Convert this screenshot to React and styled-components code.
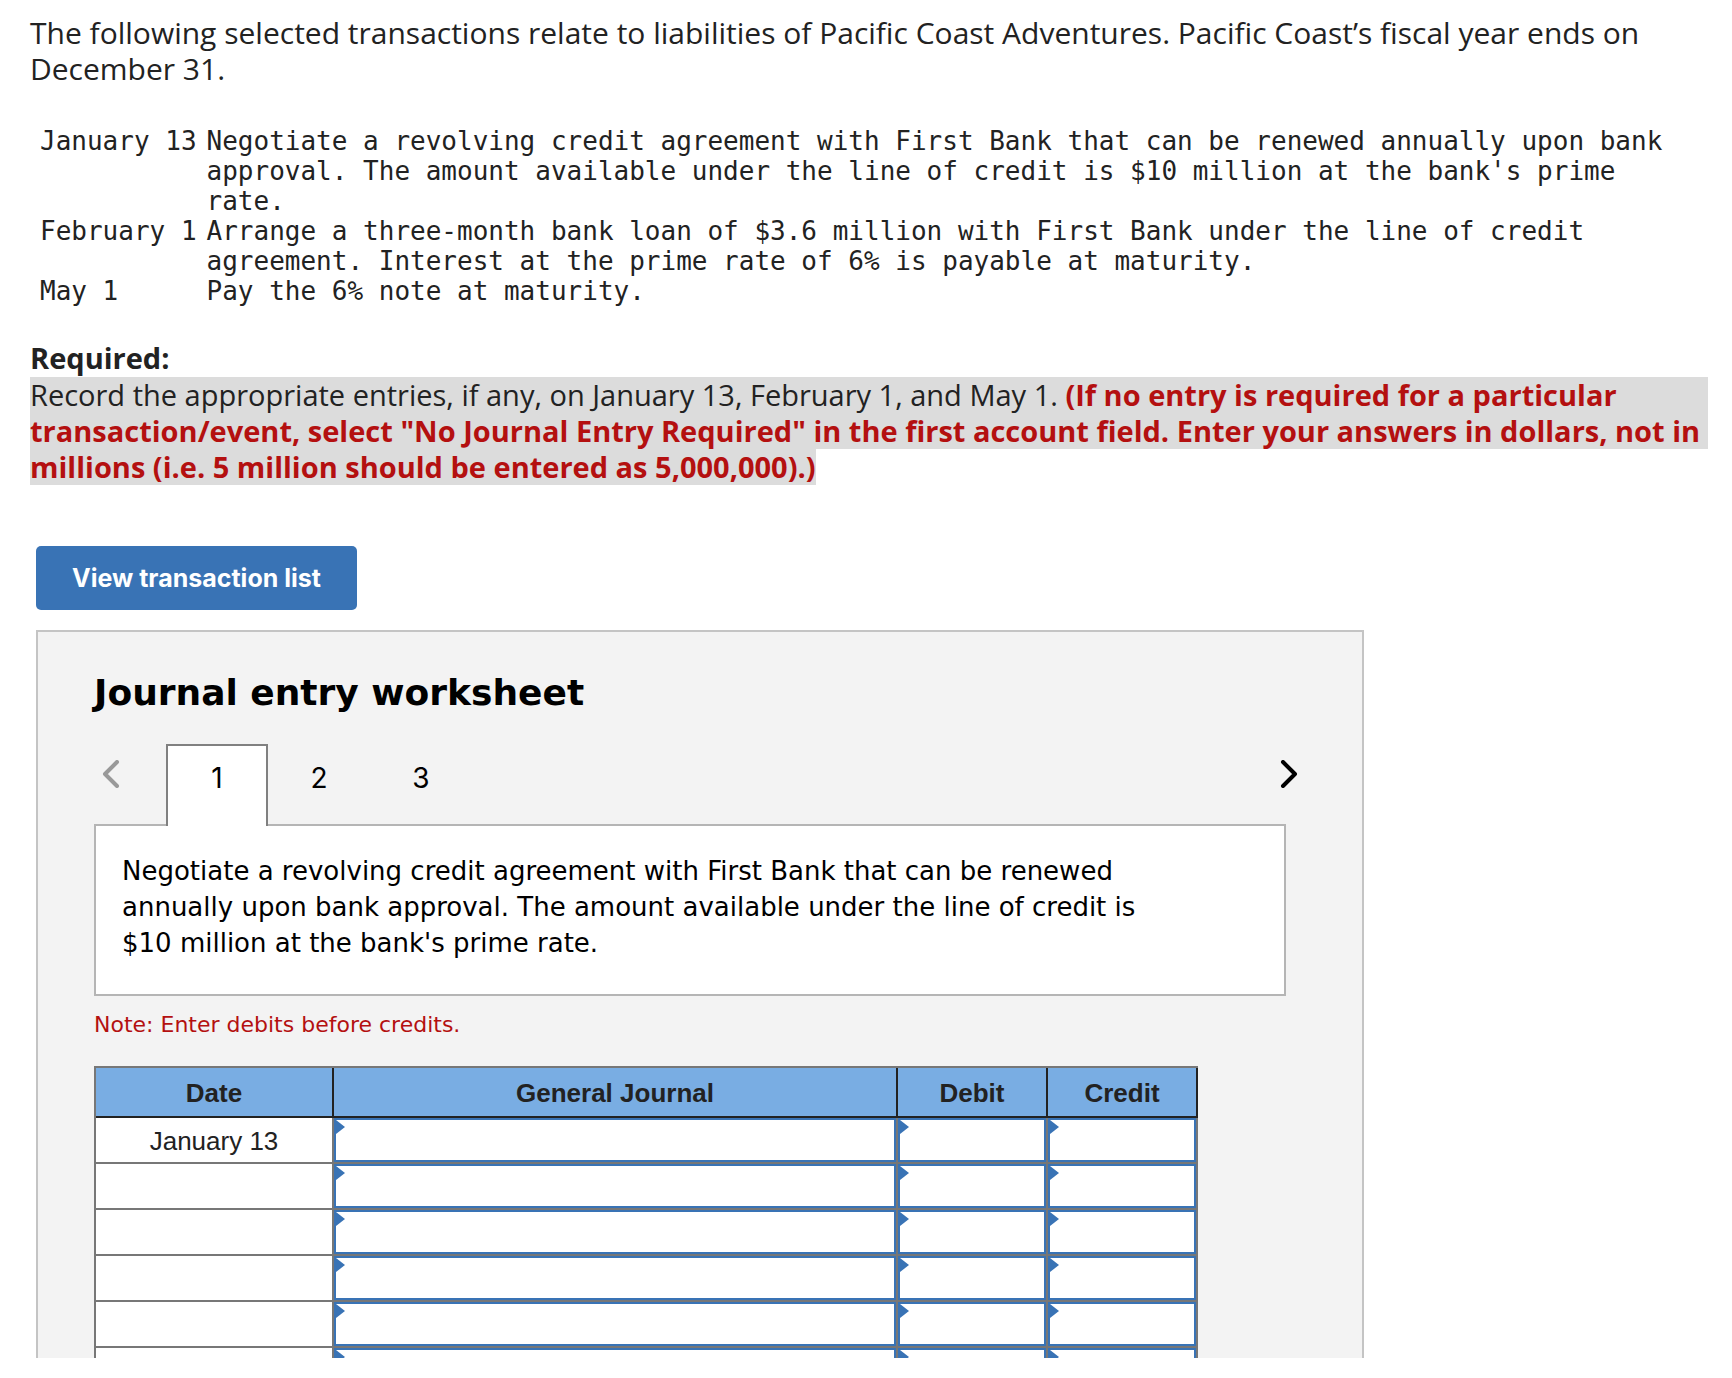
import React from "react"
import styled, { createGlobalStyle } from "styled-components"

const GlobalStyle = createGlobalStyle`
  *, *::before, *::after {
    box-sizing: border-box;
  }
  body {
    margin: 0;
    background-color: #fff;
    color: #222;
    font-family: "Open Sans", Lato, sans-serif;
    font-size: 29px;
    line-height: 36px;
  }
  p, h1, h2 {
    margin: 0;
  }
  button, input {
    font: inherit;
    color: inherit;
  }
`

const Page = styled.main`
  height: 100vh;
  padding-bottom: 20px;
`

const Content = styled.div`
  height: 100%;
  overflow: hidden;
  padding: 15px 24px 0 30px;
`

const Intro = styled.p`
  font-size: 30px;
`

const Transactions = styled.table`
  margin: 39px 0 34px 10px;
  border-collapse: collapse;
  font-family: "DejaVu Sans Mono", monospace;
  font-size: 26px;
  line-height: 30px;
  th, td {
    padding: 0;
    text-align: left;
    vertical-align: top;
    font-weight: normal;
  }
  th {
    padding-right: 10px;
    white-space: nowrap;
  }
`

const Required = styled.h2`
  margin-bottom: 1px;
  font-size: 29px;
  line-height: 36px;
`

const Highlight = styled.span`
  display: ${({ $full }) => ($full ? "block" : "inline-block")};
  background-color: #dcdcdc;
`

const Hint = styled.strong`
  color: #b41010;
`

const ListButton = styled.button`
  display: block;
  height: 64px;
  margin: 61px 0 20px 6px;
  padding: 0 36px;
  border: none;
  border-radius: 5px;
  background-color: #3973b5;
  color: #fff;
  font-family: Inter, sans-serif;
  font-size: 25px;
  font-weight: 700;
  cursor: pointer;
`

const Worksheet = styled.section`
  max-width: 1328px;
  margin-left: 6px;
  padding: 43px 76px 60px 56px;
  border: 2px solid #c4c4c4;
  background-color: #f3f3f3;
  color: #000;
  font-family: "DejaVu Sans", Verdana, sans-serif;
  font-size: 26px;
`

const Title = styled.h1`
  font-size: 36px;
  line-height: 36px;
`

const TabBar = styled.nav`
  position: relative;
  display: flex;
  align-items: flex-start;
  margin: 33px -20px -2px 0;
`

const Arrow = styled.button`
  display: flex;
  align-items: center;
  height: 60px;
  padding: 0 8px;
  border: none;
  background: none;
  color: ${({ disabled }) => (disabled ? "#999" : "#000")};
  svg {
    width: 18px;
    height: 28px;
  }
`

const Tabs = styled.div`
  display: flex;
  flex: 1;
  margin-left: 38px;
`

const Tab = styled.button`
  width: 102px;
  height: 82px;
  padding: 0 0 16px;
  border: 2px solid ${({ $active }) => ($active ? "#808080" : "transparent")};
  border-bottom: none;
  background-color: ${({ $active }) => ($active ? "#fff" : "transparent")};
  font-family: Inter, sans-serif;
  font-size: 28px;
  cursor: pointer;
`

const Description = styled.div`
  padding: 27px 110px 33px 26px;
  border: 2px solid #b5b5b5;
  background-color: #fff;
`

const Note = styled.p`
  margin: 11px 0 23px;
  color: #b41010;
  font-size: 22px;
`

const Journal = styled.table`
  width: 100%;
  max-width: 1104px;
  table-layout: fixed;
  border-collapse: separate;
  border-spacing: 0;
  border-top: 2px solid #777;
  border-left: 2px solid #777;
  background-color: #fff;
  color: #222;
  font-family: "Liberation Sans", Arial, sans-serif;
  font-size: 26px;
  th, td {
    padding: 0;
    text-align: center;
    border-right: 2px solid #777;
    border-bottom: 2px solid #777;
  }
  thead th {
    height: 50px;
    padding-top: 2px;
    border-color: #222;
    background-color: #79ade3;
  }
  td {
    height: 46px;
  }
  td:first-child {
    padding-top: 2px;
  }
`

const Col = styled.col`
  width: ${({ $width }) => $width};
`

const Field = styled.label`
  position: relative;
  display: block;
  &::before {
    content: "";
    position: absolute;
    top: 2px;
    left: 2px;
    border: solid transparent;
    border-width: 7px 0 7px 9px;
    border-left-color: #3973b5;
  }
  input {
    display: block;
    width: 100%;
    height: 44px;
    padding: 0 14px;
    border: 2px solid #3973b5;
    border-radius: 0;
    background-color: #fff;
    outline: none;
  }
`

const transactions = [
  {
    date: "January 13",
    text: "Negotiate a revolving credit agreement with First Bank that can be renewed annually upon bank approval. The amount available under the line of credit is $10 million at the bank's prime rate.",
  },
  {
    date: "February 1",
    text: "Arrange a three-month bank loan of $3.6 million with First Bank under the line of credit agreement. Interest at the prime rate of 6% is payable at maturity.",
  },
  { date: "May 1", text: "Pay the 6% note at maturity." },
]

const rows = ["January 13", "", "", "", "", ""]
const fields = ["General Journal", "Debit", "Credit"]

const Chevron = ({ points }) => (
  <svg viewBox="0 0 18 28" fill="none" stroke="currentColor" strokeWidth="4" strokeLinecap="round" strokeLinejoin="round">
    <polyline points={points} />
  </svg>
)

const App = () => (
  <Page>
    <GlobalStyle />
    <Content>
      <Intro>
        The following selected transactions relate to liabilities of Pacific Coast Adventures. Pacific Coast’s fiscal year ends on December 31.
      </Intro>
      <Transactions>
        <tbody>
          {transactions.map(({ date, text }) => (
            <tr key={date}>
              <th scope="row">{date}</th>
              <td>{text}</td>
            </tr>
          ))}
        </tbody>
      </Transactions>
      <Required>Required:</Required>
      <p>
        <Highlight $full>
          Record the appropriate entries, if any, on January 13, February 1, and May 1.{" "}
          <Hint>
            (If no entry is required for a particular transaction/event, select "No Journal Entry Required" in the first account field. Enter your answers in dollars, not in
          </Hint>
        </Highlight>
        <Highlight>
          <Hint>millions (i.e. 5 million should be entered as 5,000,000).)</Hint>
        </Highlight>
      </p>
      <ListButton type="button">View transaction list</ListButton>
      <Worksheet>
        <Title>Journal entry worksheet</Title>
        <TabBar>
          <Arrow type="button" aria-label="Previous" disabled>
            <Chevron points="15,2 3,14 15,26" />
          </Arrow>
          <Tabs>
            {[1, 2, 3].map(number => (
              <Tab key={number} type="button" $active={number === 1}>{number}</Tab>
            ))}
          </Tabs>
          <Arrow type="button" aria-label="Next">
            <Chevron points="3,2 15,14 3,26" />
          </Arrow>
        </TabBar>
        <Description>
          <p>{transactions[0].text}</p>
        </Description>
        <Note>Note: Enter debits before credits.</Note>
        <Journal>
          <colgroup>
            <Col $width="238px" />
            <Col />
            <Col $width="150px" />
            <Col $width="150px" />
          </colgroup>
          <thead>
            <tr>
              <th scope="col">Date</th>
              {fields.map(field => (
                <th key={field} scope="col">{field}</th>
              ))}
            </tr>
          </thead>
          <tbody>
            {rows.map((date, index) => (
              <tr key={index}>
                <td>{date}</td>
                {fields.map(field => (
                  <td key={field}>
                    <Field>
                      <input type="text" aria-label={`${field}, row ${index + 1}`} />
                    </Field>
                  </td>
                ))}
              </tr>
            ))}
          </tbody>
        </Journal>
      </Worksheet>
    </Content>
  </Page>
)

export default App
